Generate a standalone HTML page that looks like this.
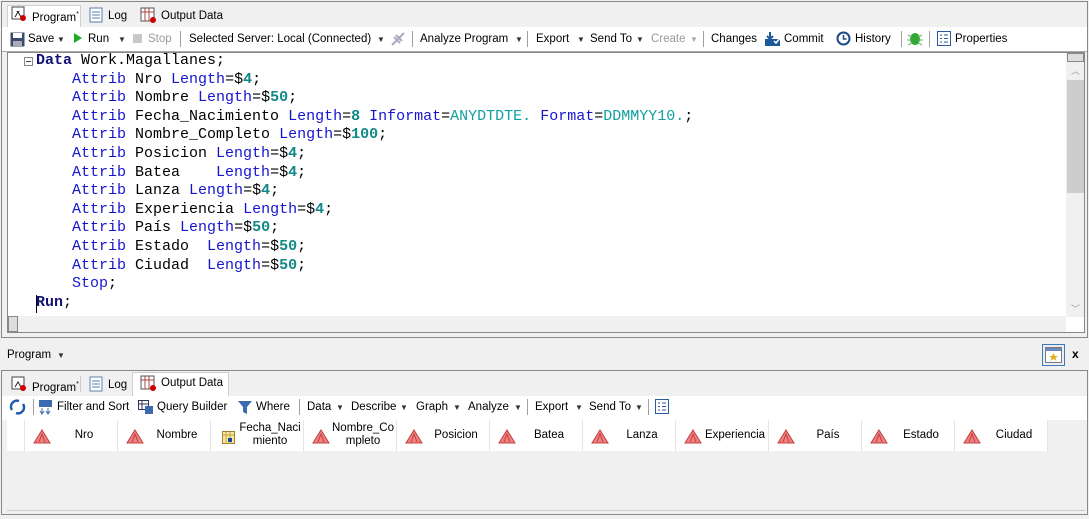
<!DOCTYPE html>
<html><head><meta charset="utf-8"><style>
*{margin:0;padding:0;box-sizing:border-box}
body{width:1089px;height:519px;background:#f0f0f0;position:relative;overflow:hidden;font-family:"Liberation Sans",sans-serif;font-size:12px;color:#000}
.a{position:absolute;white-space:nowrap}
.t{font-size:11.5px;line-height:14px}
.dd{font-size:8px;color:#333}
.sep{position:absolute;width:1px;height:16px;background:#a0a0a0}
.code{position:absolute;font-family:"Liberation Mono",monospace;font-size:15px;line-height:18.6px;white-space:pre;color:#000}
.k{color:#1515d0}.kd{color:#111177;font-weight:bold}.n{color:#118888;font-weight:bold}.f{color:#11a0a0}
.col{position:absolute;top:420px;height:31px;width:93px;background:#fff;border-right:1px solid #e4e4e4;font-size:11.5px}
.col .l{position:absolute;left:0;right:0;top:9px;text-align:center;padding-left:26px;line-height:13px}
.col .l2{top:2px}
.col svg{position:absolute;left:8px;top:9px}
</style></head><body>
<div class="a" style="left:1px;top:1px;width:1087px;height:337px;border:1px solid #888;background:#f0f0f0"></div>
<div class="a" style="left:7px;top:5px;width:74px;height:23px;background:#fff;border:1px solid #d0d0d0;border-bottom:none"></div>
<svg class="a" style="left:11px;top:6px" width="16" height="16"><rect x="1" y="1" width="12" height="12" fill="#fff" stroke="#444"/><path d="M4 11l3-5 3 5M6 5a1 1 0 1 0 2 0" stroke="#222" fill="none"/><circle cx="12" cy="12" r="3" fill="#c00"/></svg>
<div class="a t" style="left:32px;top:8px">Program<sup style="font-size:7px">*</sup></div>
<svg class="a" style="left:88px;top:7px" width="16" height="16"><rect x="2" y="1" width="12" height="14" fill="#fff" stroke="#5a7fb0"/><path d="M4 5h8M4 8h8M4 11h8" stroke="#5a7fb0"/></svg>
<div class="a t" style="left:108px;top:9px">Log</div>
<svg class="a" style="left:140px;top:7px" width="16" height="16"><rect x="1" y="1" width="13" height="13" fill="#fff" stroke="#555"/><path d="M1 5h13M5 1v13M9 1v13" stroke="#a44"/><circle cx="13" cy="13" r="3" fill="#c00"/></svg>
<div class="a t" style="left:161px;top:9px">Output Data</div>
<div class="a" style="left:2px;top:27px;width:1085px;height:25px;background:#fff;border-bottom:1px solid #aaa"></div>
<svg class="a" style="left:10px;top:32px" width="15" height="15"><rect x="0.5" y="0.5" width="14" height="14" fill="#3a4a6a"/><rect x="3" y="1" width="9" height="5" fill="#fff"/><rect x="3" y="9" width="9" height="5" fill="#aab"/></svg>
<div class="a t" style="left:28px;top:32px">Save</div><div class="a dd" style="left:57px;top:35px">▼</div>
<div class="a" style="left:74px;top:33px;width:0;height:0;border-left:8px solid #2a2;border-top:5px solid transparent;border-bottom:5px solid transparent"></div>
<div class="a t" style="left:88px;top:32px">Run</div><div class="a dd" style="left:118px;top:35px">▼</div>
<div class="a" style="left:133px;top:34px;width:9px;height:9px;background:#c8c8c8"></div>
<div class="a t" style="left:148px;top:32px;color:#999">Stop</div>
<div class="sep" style="left:180px;top:31px"></div>
<div class="a t" style="left:189px;top:32px">Selected Server: Local (Connected)</div><div class="a dd" style="left:377px;top:35px">▼</div>
<svg class="a" style="left:390px;top:31px" width="16" height="16"><path d="M2 14L14 2M4 6l6 6M6 4l6 6" stroke="#aab" stroke-width="2"/></svg>
<div class="sep" style="left:412px;top:31px"></div>
<div class="a t" style="left:420px;top:32px">Analyze Program</div><div class="a dd" style="left:515px;top:35px">▼</div>
<div class="sep" style="left:527px;top:31px"></div>
<div class="a t" style="left:536px;top:32px">Export</div><div class="a dd" style="left:577px;top:35px">▼</div>
<div class="a t" style="left:590px;top:32px">Send To</div><div class="a dd" style="left:636px;top:35px">▼</div>
<div class="a t" style="left:651px;top:32px;color:#999">Create</div><div class="a dd" style="left:690px;top:35px;color:#aaa">▼</div>
<div class="sep" style="left:703px;top:31px"></div>
<div class="a t" style="left:711px;top:32px">Changes</div>
<svg class="a" style="left:764px;top:30px" width="17" height="17"><path d="M1 9h15v7H1z" fill="#1e5a9a"/><path d="M6 2v6M3 6l3 3 3-3" stroke="#1e5a9a" stroke-width="2" fill="none"/><path d="M10 11l2 2 4-5" stroke="#fff" stroke-width="1.5" fill="none"/></svg>
<div class="a t" style="left:784px;top:32px">Commit</div>
<svg class="a" style="left:836px;top:31px" width="15" height="15"><circle cx="7.5" cy="7.5" r="6" fill="none" stroke="#1e4a8a" stroke-width="2"/><path d="M7.5 4v4h3" stroke="#1e4a8a" stroke-width="1.5" fill="none"/></svg>
<div class="a t" style="left:855px;top:32px">History</div>
<div class="sep" style="left:901px;top:31px"></div>
<svg class="a" style="left:906px;top:30px" width="18" height="17"><ellipse cx="9" cy="9" rx="5" ry="6" fill="#3a3"/><path d="M2 5l4 2M16 5l-4 2M1 10h4M17 10h-4M2 15l4-2M16 15l-4-2" stroke="#6b6"/></svg>
<div class="sep" style="left:929px;top:31px"></div>
<svg class="a" style="left:937px;top:31px" width="14" height="15"><rect x="0.5" y="0.5" width="13" height="14" fill="#fff" stroke="#2a5aa0"/><path d="M3 4h2M7 4h4M3 7.5h2M7 7.5h4M3 11h2M7 11h4" stroke="#2a5aa0"/></svg>
<div class="a t" style="left:955px;top:32px">Properties</div>
<div class="a" style="left:7px;top:52px;width:1078px;height:281px;background:#fff;border:1px solid #888"></div>
<div class="a" style="left:24px;top:57px;width:9px;height:9px;border:1px solid #888;background:#fff"></div>
<div class="a" style="left:26px;top:61px;width:5px;height:1px;background:#444"></div>
<div class="code" style="left:36px;top:52px"><span class="kd">Data</span> Work.Magallanes;
    <span class="k">Attrib</span> Nro <span class="k">Length</span>=$<span class="n">4</span>;
    <span class="k">Attrib</span> Nombre <span class="k">Length</span>=$<span class="n">50</span>;
    <span class="k">Attrib</span> Fecha_Nacimiento <span class="k">Length</span>=<span class="n">8</span> <span class="k">Informat</span>=<span class="f">ANYDTDTE.</span> <span class="k">Format</span>=<span class="f">DDMMYY10.</span>;
    <span class="k">Attrib</span> Nombre_Completo <span class="k">Length</span>=$<span class="n">100</span>;
    <span class="k">Attrib</span> Posicion <span class="k">Length</span>=$<span class="n">4</span>;
    <span class="k">Attrib</span> Batea    <span class="k">Length</span>=$<span class="n">4</span>;
    <span class="k">Attrib</span> Lanza <span class="k">Length</span>=$<span class="n">4</span>;
    <span class="k">Attrib</span> Experiencia <span class="k">Length</span>=$<span class="n">4</span>;
    <span class="k">Attrib</span> País <span class="k">Length</span>=$<span class="n">50</span>;
    <span class="k">Attrib</span> Estado  <span class="k">Length</span>=$<span class="n">50</span>;
    <span class="k">Attrib</span> Ciudad  <span class="k">Length</span>=$<span class="n">50</span>;
    <span class="k">Stop</span>;
<span class="kd">Run</span>;</div>
<div class="a" style="left:36px;top:295px;width:1px;height:18px;background:#000"></div>
<div class="a" style="left:1066px;top:53px;width:18px;height:264px;background:#f0f0f0"></div>
<div class="a" style="left:1067px;top:53px;width:17px;height:9px;background:#ddd;border:1px solid #888"></div>
<div class="a" style="left:1067px;top:80px;width:17px;height:113px;background:#cdcdcd"></div>
<div class="a" style="left:1071px;top:64px;font-size:9px;color:#999">︿</div>
<div class="a" style="left:1071px;top:302px;font-size:9px;color:#999">﹀</div>
<div class="a" style="left:8px;top:316px;width:1058px;height:16px;background:#f0f0f0"></div>
<div class="a" style="left:8px;top:316px;width:10px;height:16px;background:#ddd;border:1px solid #888"></div>
<div class="a t" style="left:7px;top:348px">Program</div><div class="a dd" style="left:57px;top:351px">▼</div>
<div class="a" style="left:1042px;top:344px;width:23px;height:22px;border:1px solid #3a7ac0;background:#eee"></div>
<svg class="a" style="left:1045px;top:347px" width="17" height="16"><rect x="0.5" y="0.5" width="16" height="15" fill="#fff" stroke="#777"/><rect x="1" y="1" width="15" height="3" fill="#6a8ac0"/><path d="M8.5 6l1.5 3h3l-2.5 2 1 3-3-2-3 2 1-3-2.5-2h3z" fill="#e0b020"/></svg>
<div class="a" style="left:1072px;top:347px;font-size:12px;font-weight:bold">x</div>
<div class="a" style="left:1px;top:370px;width:1087px;height:145px;border:1px solid #888;background:#f0f0f0"></div>
<svg class="a" style="left:11px;top:376px" width="16" height="16"><rect x="1" y="1" width="12" height="12" fill="#fff" stroke="#444"/><path d="M4 11l3-5 3 5" stroke="#222" fill="none"/><circle cx="12" cy="12" r="3" fill="#c00"/></svg>
<div class="a t" style="left:32px;top:378px">Program<sup style="font-size:7px">*</sup></div>
<div class="a" style="left:80px;top:376px;width:1px;height:16px;background:#ccc"></div>
<svg class="a" style="left:88px;top:376px" width="16" height="16"><rect x="2" y="1" width="12" height="14" fill="#fff" stroke="#5a7fb0"/><path d="M4 5h8M4 8h8M4 11h8" stroke="#5a7fb0"/></svg>
<div class="a t" style="left:108px;top:378px">Log</div>
<div class="a" style="left:132px;top:372px;width:97px;height:25px;background:#fff;border:1px solid #d0d0d0;border-bottom:none"></div>
<svg class="a" style="left:140px;top:375px" width="16" height="16"><rect x="1" y="1" width="13" height="13" fill="#fff" stroke="#555"/><path d="M1 5h13M5 1v13M9 1v13" stroke="#a44"/><circle cx="13" cy="13" r="3" fill="#c00"/></svg>
<div class="a t" style="left:161px;top:376px">Output Data</div>
<div class="a" style="left:2px;top:396px;width:1085px;height:24px;background:#fff"></div>
<svg class="a" style="left:9px;top:399px" width="17" height="16"><path d="M3 11a6 6 0 0 1 7-9M14 5a6 6 0 0 1-7 9" stroke="#1e5ab0" stroke-width="2.5" fill="none"/></svg>
<div class="sep" style="left:33px;top:399px"></div>
<svg class="a" style="left:38px;top:399px" width="17" height="16"><rect x="1" y="1" width="13" height="7" fill="#3a6ab0"/><path d="M4 9v6M10 9v6M2 12l2 3 2-3M8 12l2 3 2-3" stroke="#3a6ab0" fill="none"/></svg>
<div class="a t" style="left:57px;top:400px">Filter and Sort</div>
<svg class="a" style="left:138px;top:400px" width="16" height="15"><rect x="0.5" y="0.5" width="10" height="9" fill="#fff" stroke="#335"/><path d="M0 4h10M4 0v10" stroke="#335"/><rect x="7" y="6" width="8" height="8" fill="#3a6ab0"/></svg>
<div class="a t" style="left:157px;top:400px">Query Builder</div>
<svg class="a" style="left:237px;top:399px" width="16" height="16"><path d="M1 2h14l-5 6v7l-4-2V8z" fill="#3a6ab0"/></svg>
<div class="a t" style="left:256px;top:400px">Where</div>
<div class="sep" style="left:299px;top:399px"></div>
<div class="a t" style="left:307px;top:400px">Data</div><div class="a dd" style="left:336px;top:403px">▼</div>
<div class="a t" style="left:351px;top:400px">Describe</div><div class="a dd" style="left:400px;top:403px">▼</div>
<div class="a t" style="left:416px;top:400px">Graph</div><div class="a dd" style="left:453px;top:403px">▼</div>
<div class="a t" style="left:468px;top:400px">Analyze</div><div class="a dd" style="left:514px;top:403px">▼</div>
<div class="sep" style="left:527px;top:399px"></div>
<div class="a t" style="left:535px;top:400px">Export</div><div class="a dd" style="left:575px;top:403px">▼</div>
<div class="a t" style="left:589px;top:400px">Send To</div><div class="a dd" style="left:635px;top:403px">▼</div>
<div class="sep" style="left:648px;top:399px"></div>
<svg class="a" style="left:655px;top:399px" width="14" height="15"><rect x="0.5" y="0.5" width="13" height="14" fill="#fff" stroke="#2a5aa0"/><path d="M3 4h2M7 4h4M3 7.5h2M7 7.5h4M3 11h2M7 11h4" stroke="#2a5aa0"/></svg>
<div class="a" style="left:7px;top:420px;width:1078px;height:91px;background:#f0f0f0;border-bottom:1px solid #ccc"></div>
<div class="a" style="left:7px;top:420px;width:18px;height:31px;background:#fff;border-right:1px solid #e4e4e4"></div>
<div class="col" style="left:25px"><svg width="18" height="16"><path d="M9 1L17 14H1z" fill="#f08080" stroke="#c04040"/><path d="M6 13l3-8 3 8" stroke="#c04040" fill="none"/></svg><div class="l">Nro</div></div>
<div class="col" style="left:118px"><svg width="18" height="16"><path d="M9 1L17 14H1z" fill="#f08080" stroke="#c04040"/><path d="M6 13l3-8 3 8" stroke="#c04040" fill="none"/></svg><div class="l">Nombre</div></div>
<div class="col" style="left:211px"><svg width="18" height="16"><rect x="3.5" y="2.5" width="12" height="12" fill="#f8e8a0" stroke="#a08030"/><path d="M3 6h12M7 3v12M11 3v12" stroke="#c0a040"/><rect x="9" y="9" width="4" height="4" fill="#2040a0"/></svg><div class="l l2">Fecha_Naci<br>miento</div></div>
<div class="col" style="left:304px"><svg width="18" height="16"><path d="M9 1L17 14H1z" fill="#f08080" stroke="#c04040"/><path d="M6 13l3-8 3 8" stroke="#c04040" fill="none"/></svg><div class="l l2">Nombre_Co<br>mpleto</div></div>
<div class="col" style="left:397px"><svg width="18" height="16"><path d="M9 1L17 14H1z" fill="#f08080" stroke="#c04040"/><path d="M6 13l3-8 3 8" stroke="#c04040" fill="none"/></svg><div class="l">Posicion</div></div>
<div class="col" style="left:490px"><svg width="18" height="16"><path d="M9 1L17 14H1z" fill="#f08080" stroke="#c04040"/><path d="M6 13l3-8 3 8" stroke="#c04040" fill="none"/></svg><div class="l">Batea</div></div>
<div class="col" style="left:583px"><svg width="18" height="16"><path d="M9 1L17 14H1z" fill="#f08080" stroke="#c04040"/><path d="M6 13l3-8 3 8" stroke="#c04040" fill="none"/></svg><div class="l">Lanza</div></div>
<div class="col" style="left:676px"><svg width="18" height="16"><path d="M9 1L17 14H1z" fill="#f08080" stroke="#c04040"/><path d="M6 13l3-8 3 8" stroke="#c04040" fill="none"/></svg><div class="l">Experiencia</div></div>
<div class="col" style="left:769px"><svg width="18" height="16"><path d="M9 1L17 14H1z" fill="#f08080" stroke="#c04040"/><path d="M6 13l3-8 3 8" stroke="#c04040" fill="none"/></svg><div class="l">País</div></div>
<div class="col" style="left:862px"><svg width="18" height="16"><path d="M9 1L17 14H1z" fill="#f08080" stroke="#c04040"/><path d="M6 13l3-8 3 8" stroke="#c04040" fill="none"/></svg><div class="l">Estado</div></div>
<div class="col" style="left:955px"><svg width="18" height="16"><path d="M9 1L17 14H1z" fill="#f08080" stroke="#c04040"/><path d="M6 13l3-8 3 8" stroke="#c04040" fill="none"/></svg><div class="l">Ciudad</div></div>
</body></html>
